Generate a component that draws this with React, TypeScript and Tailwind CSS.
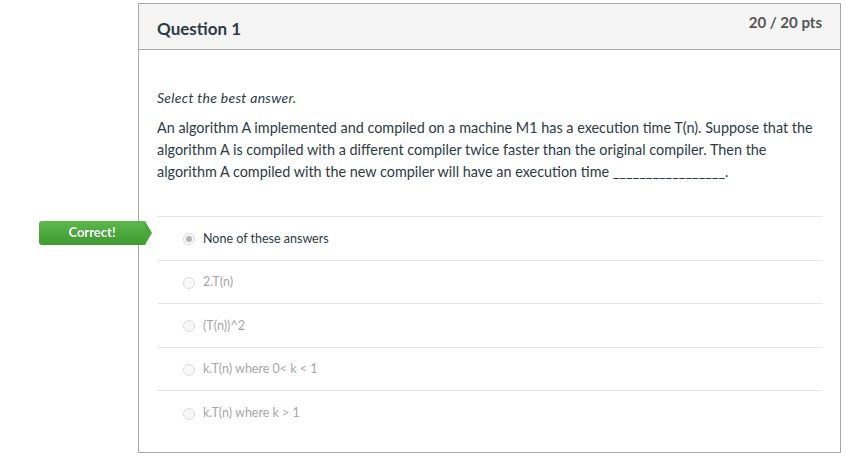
import React from 'react';

const answers = [
  { text: 'None of these answers', selected: true },
  { text: '2.T(n)', selected: false },
  { text: '(T(n))^2', selected: false },
  { text: 'k.T(n) where 0< k < 1', selected: false },
  { text: 'k.T(n) where k > 1', selected: false },
];

function Radio({ checked }: { checked: boolean }) {
  return (
    <span className="relative flex items-center justify-center w-[12px] h-[12px] rounded-full border border-[#dcdcdc] bg-[#f8f8f8]">
      {checked && <span className="w-[6px] h-[6px] rounded-full bg-[#b5b5b5]" />}
    </span>
  );
}

export default function App() {
  return (
    <div className="w-[846px] h-[463px] bg-white pt-[3px] pl-[138px]" style={{ fontFamily: 'Lato, "Open Sans", sans-serif' }}>
      <div className="w-[703px] h-[450px] border border-[#a8a8a8] flex flex-col">
        <div className="h-[46px] bg-[#f5f5f5] border-b border-[#a8a8a8] flex items-start justify-between px-[18px]">
          <h2 className="text-[17px] font-bold text-[#2d3b45] mt-[12px]">Question 1</h2>
          <span className="text-[15px] font-bold text-[#555555] mt-[7px]">20 / 20 pts</span>
        </div>

        <div className="px-[18px] pt-[38px]">
          <p className="text-[14px] italic text-[#2d3b45] leading-[20px] tracking-[0.3px]">Select the best answer.</p>
          <p className="text-[14.4px] text-[#2d3b45] leading-[22px] mt-[9px]">
            An algorithm A implemented and compiled on a machine M1 has a execution time T(n). Suppose that the algorithm A is compiled with a different compiler twice faster than the original compiler. Then the algorithm A compiled with the new compiler will have an execution time _________________.
          </p>

          <div className="mt-[33px] border-t border-[#e6e6e6]">
            {answers.map((a, i) => (
              <div
                key={i}
                className={`relative h-[43.5px] flex items-center pl-[26px] gap-[8px] pt-[2px] ${i < answers.length - 1 ? 'border-b border-[#e6e6e6]' : ''}`}
              >
                {i === 0 && (
                  <div className="absolute left-[-118px] top-[4px] flex items-center">
                    <div className="w-[106px] h-[24px] rounded-l-[3px] bg-gradient-to-b from-[#5cb94a] to-[#3e9a30] flex items-center justify-center">
                      <span className="text-white text-[13px] font-bold [text-shadow:0_0_1px_rgba(0,0,0,0.4)]">Correct!</span>
                    </div>
                    <div className="w-0 h-0 border-y-[12px] border-y-transparent border-l-[7px] border-l-[#4aa83a]" />
                  </div>
                )}
                <Radio checked={a.selected} />
                <span className={`text-[12.5px] ${a.selected ? 'text-[#2d3b45]' : 'text-[#a6a6a6]'}`}>{a.text}</span>
              </div>
            ))}
          </div>
        </div>
      </div>
    </div>
  );
}
